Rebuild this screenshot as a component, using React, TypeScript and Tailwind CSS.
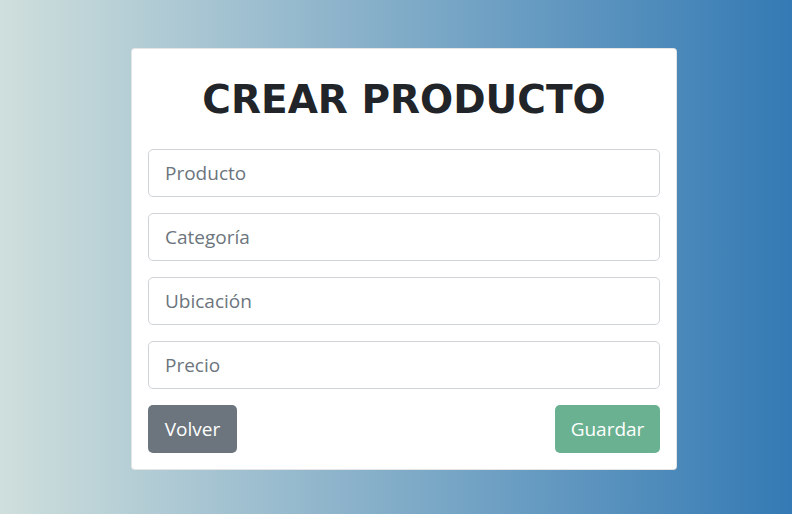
import React from "react";

export default function App() {
  const fields = ["Producto", "Categoría", "Ubicación", "Precio"];
  return (
    <div
      className="w-[792px] h-[514px] flex justify-center pl-[16px] bg-[linear-gradient(to_right,#cfdfdc,#347ab4)]"
      style={{ fontFamily: '"Open Sans", "Noto Sans", sans-serif' }}
    >
      <div className="mt-[48px] w-[546px] h-[422px] bg-white border border-black/10 rounded-[4px] p-4 flex flex-col">
        <h1
          className="text-center text-[#212529] text-[39px] leading-[48px] font-extrabold pt-[11px] pb-[9px] mb-[16px]"
          style={{ fontFamily: '"DejaVu Sans", sans-serif' }}
        >
          CREAR PRODUCTO
        </h1>
        <div className="flex flex-col gap-4">
          {fields.map((f) => (
            <input
              key={f}
              placeholder={f}
              className="w-full h-[48px] border border-[#ced4da] rounded-[5px] px-4 text-[19px] text-[#212529] placeholder:text-[#6c757d] outline-none"
            />
          ))}
          <div className="flex justify-between">
            <button className="h-[48px] w-[89px] rounded-[5px] bg-[#6c757d] text-white text-[19px]">
              Volver
            </button>
            <button className="h-[48px] w-[105px] rounded-[5px] bg-[#69b190] text-white text-[19px]">
              Guardar
            </button>
          </div>
        </div>
      </div>
    </div>
  );
}
